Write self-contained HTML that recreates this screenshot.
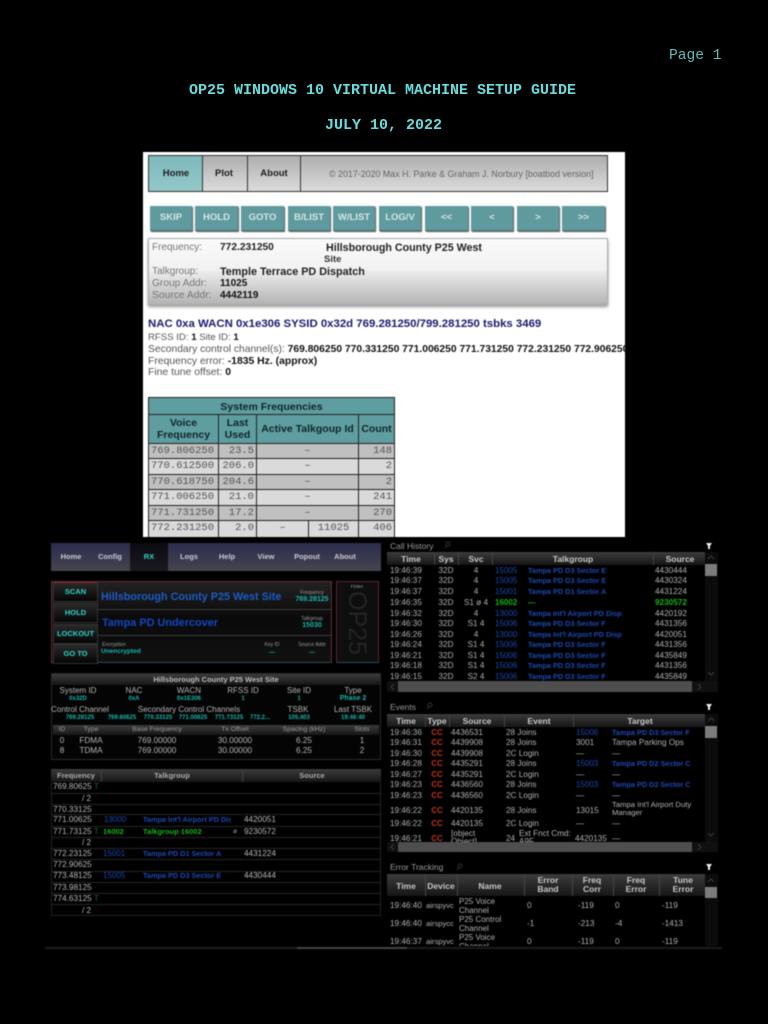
<!DOCTYPE html>
<html><head><meta charset="utf-8"><title>OP25 Windows 10 Virtual Machine Setup Guide</title>
<style>
html,body{margin:0;padding:0;background:#000;width:768px;height:1024px;overflow:hidden}
body{position:relative;font-family:"Liberation Sans",sans-serif}
i{position:absolute;font-style:normal;white-space:nowrap;line-height:12px;display:block}
.c{transform:translateX(-50%)}
.b{font-weight:bold}
.d{position:absolute}
.lay{position:absolute;left:0;top:0;width:768px;height:1024px}
.mono{font-family:"Liberation Mono",monospace}
.nb{color:#1d1d1d;font-weight:bold;font-size:9px}
.btn{position:absolute;top:206px;height:25px;background:#5f9a9e;box-shadow:1px 1px 1px #555;border-bottom:1px solid #4a7478;box-sizing:border-box;color:#d5e6e6;font-weight:bold;font-size:9.5px;text-align:center;line-height:24px}
.g{color:#777}
.k{color:#111;font-weight:bold}
.th{position:absolute;background:#5f9ea0;border:1px solid #222;box-sizing:border-box;color:#10262a;font-weight:bold;font-size:10.5px;text-align:center;line-height:14px;display:flex;align-items:center;justify-content:center}
.td{position:absolute;border:1px solid #222;box-sizing:border-box;color:#555;font-size:10.5px;font-family:"Liberation Mono",monospace;line-height:14px;padding:0 2px;white-space:nowrap}
.dk{background:#c0c0c0}.lt{background:#dadada}
.nv{color:#c8c8d0;font-size:7.5px;font-weight:bold}
.sb{position:absolute;left:53px;width:45px;height:20px;background:linear-gradient(#2a2a2a,#050505);border:1px solid #333;box-sizing:border-box;color:#2dd4c8;font-size:7.5px;font-weight:bold;text-align:center;line-height:18px}
.l{color:#9a9a9a;font-size:6.8px}
.v{color:#17b5ab;font-size:6px;font-weight:bold}
.w{color:#b5b5b5;font-size:8.2px}
.h{color:#b5b5b5;font-size:7.5px;font-weight:bold}
.bl{color:#1c48b0;font-size:7.3px;font-weight:bold}
.id{font-size:8px;font-weight:normal}
.hb{position:absolute;background:linear-gradient(#3c3c3c,#161616)}
.se{position:absolute;width:1px;background:#444}
.ln{position:absolute;height:1px;background:#242424}
.sc{position:absolute;background:#7c7c7c}
.sh{position:absolute;background:#4e4e4e}
.t2{color:#b0b0b0;font-size:8.2px}
.hh{color:#c8c8c8;font-size:8.5px;font-weight:bold}
.rd{color:#c0341c;font-size:8px;font-weight:bold}
.gr{color:#19b019;font-size:7.5px;font-weight:bold}
.ti{color:#999;font-size:8.5px}
</style></head><body>

<i class="mono" style="left:669px;top:50px;font-size:14.6px;color:#5cbcbc">Page 1</i>
<i class="mono b" style="left:189px;top:85px;font-size:15px;color:#68dcdc">OP25 WINDOWS 10 VIRTUAL MACHINE SETUP GUIDE</i>
<i class="mono b" style="left:325px;top:120px;font-size:15px;color:#68dcdc">JULY 10, 2022</i>

<div class="lay" style="filter:blur(.4px)">
<div class="d" style="left:143px;top:152px;width:482px;height:385px;background:#fff"></div>

<div class="d" style="left:148px;top:155px;width:460px;height:37px;box-sizing:border-box;border:1px solid #333;background:linear-gradient(#aeaeae,#dcdcdc)"></div>
<div class="d" style="left:149px;top:156px;width:53px;height:35px;background:linear-gradient(#7eb9bc,#93c8ca);border-right:1px solid #333"></div>
<div class="d" style="left:202px;top:156px;width:45px;height:35px;border-right:1px solid #333"></div>
<div class="d" style="left:247px;top:156px;width:53px;height:35px;border-right:1px solid #333"></div>
<i class="c nb" style="left:176px;top:168px;font-size:9.5px">Home</i>
<i class="c nb" style="left:224px;top:168px;font-size:9.5px">Plot</i>
<i class="c nb" style="left:274px;top:168px;font-size:9.5px">About</i>
<i style="left:329px;top:168px;font-size:8.9px;color:#666">© 2017-2020 Max H. Parke &amp; Graham J. Norbury [boatbod version]</i>

<div class="btn" style="left:150px;width:42px">SKIP</div>
<div class="btn" style="left:195px;width:43px">HOLD</div>
<div class="btn" style="left:241px;width:43px">GOTO</div>
<div class="btn" style="left:288px;width:42px">B/LIST</div>
<div class="btn" style="left:333px;width:42px">W/LIST</div>
<div class="btn" style="left:379px;width:42px">LOG/V</div>
<div class="btn" style="left:425px;width:43px">&lt;&lt;</div>
<div class="btn" style="left:471px;width:42px">&lt;</div>
<div class="btn" style="left:517px;width:42px">&gt;</div>
<div class="btn" style="left:562px;width:43px">&gt;&gt;</div>

<div class="d" style="left:148px;top:238px;width:460px;height:67px;box-sizing:border-box;border:1px solid #aaa;background:linear-gradient(#fafafa,#f2f2f2 45%,#b4b4b4);box-shadow:0 2px 3px #999"></div>
<i class="g" style="left:152px;top:242px;font-size:10px">Frequency:</i>
<i class="k" style="left:220px;top:242px;font-size:10.2px;color:#222">772.231250</i>
<i class="k" style="left:326px;top:242px;font-size:10.7px;color:#222">Hillsborough County P25 West</i>
<i class="k" style="left:324px;top:254px;font-size:9.5px;color:#333">Site</i>
<i class="g" style="left:152px;top:266px;font-size:10px">Talkgroup:</i>
<i class="k" style="left:220px;top:266px;font-size:10.8px;color:#222">Temple Terrace PD Dispatch</i>
<i class="g" style="left:152px;top:278px;font-size:10.2px">Group Addr:</i>
<i class="k" style="left:220px;top:278px;font-size:10px">11025</i>
<i class="g" style="left:152px;top:290px;font-size:10.3px">Source Addr:</i>
<i class="k" style="left:220px;top:290px;font-size:10px">4442119</i>

<i class="b" style="left:148px;top:318px;font-size:11.4px;color:#1a1a6e">NAC 0xa WACN 0x1e306 SYSID 0x32d 769.281250/799.281250 tsbks 3469</i>
<i style="left:148px;top:332px;font-size:9.6px;color:#555">RFSS ID: <span style="color:#111;font-weight:bold">1</span> Site ID: <span style="color:#111;font-weight:bold">1</span></i>
<i style="left:148px;top:344px;font-size:10.3px;color:#555;width:477px;overflow:hidden">Secondary control channel(s): <span style="color:#111;font-weight:bold">769.806250 770.331250 771.006250 771.731250 772.231250 772.906250</span></i>
<i style="left:148px;top:356px;font-size:10.4px;color:#555">Frequency error: <span style="color:#111;font-weight:bold">-1835 Hz. (approx)</span></i>
<i style="left:148px;top:367px;font-size:10.4px;color:#555">Fine tune offset: <span style="color:#111;font-weight:bold">0</span></i>

<div class="th" style="left:148px;top:397px;width:247px;height:18px;padding-top:2px">System Frequencies</div>
<div class="th" style="left:148px;top:414px;width:71px;height:30px;line-height:12px">Voice<br>Frequency</div>
<div class="th" style="left:218px;top:414px;width:39px;height:30px;line-height:12px">Last<br>Used</div>
<div class="th" style="left:256px;top:414px;width:103px;height:30px">Active Talkgoup Id</div>
<div class="th" style="left:358px;top:414px;width:37px;height:30px">Count</div>

<div class="td dk" style="left:148px;top:443px;width:71px;height:16px">769.806250</div><div class="td dk" style="left:218px;top:443px;width:39px;height:16px;text-align:right">23.5</div><div class="td dk" style="left:256px;top:443px;width:103px;height:16px;text-align:center">–</div><div class="td dk" style="left:358px;top:443px;width:37px;height:16px;text-align:right">148</div>
<div class="td lt" style="left:148px;top:458px;width:71px;height:17px">770.612500</div><div class="td lt" style="left:218px;top:458px;width:39px;height:17px;text-align:right">206.0</div><div class="td lt" style="left:256px;top:458px;width:103px;height:17px;text-align:center">–</div><div class="td lt" style="left:358px;top:458px;width:37px;height:17px;text-align:right">2</div>
<div class="td dk" style="left:148px;top:474px;width:71px;height:16px">770.618750</div><div class="td dk" style="left:218px;top:474px;width:39px;height:16px;text-align:right">204.6</div><div class="td dk" style="left:256px;top:474px;width:103px;height:16px;text-align:center">–</div><div class="td dk" style="left:358px;top:474px;width:37px;height:16px;text-align:right">2</div>
<div class="td lt" style="left:148px;top:489px;width:71px;height:17px">771.006250</div><div class="td lt" style="left:218px;top:489px;width:39px;height:17px;text-align:right">21.0</div><div class="td lt" style="left:256px;top:489px;width:103px;height:17px;text-align:center">–</div><div class="td lt" style="left:358px;top:489px;width:37px;height:17px;text-align:right">241</div>
<div class="td dk" style="left:148px;top:505px;width:71px;height:16px">771.731250</div><div class="td dk" style="left:218px;top:505px;width:39px;height:16px;text-align:right">17.2</div><div class="td dk" style="left:256px;top:505px;width:103px;height:16px;text-align:center">–</div><div class="td dk" style="left:358px;top:505px;width:37px;height:16px;text-align:right">270</div>
<div class="td lt" style="left:148px;top:520px;width:71px;height:17px;border-bottom:0">772.231250</div><div class="td lt" style="left:218px;top:520px;width:39px;height:17px;text-align:right;border-bottom:0">2.0</div><div class="td lt" style="left:256px;top:520px;width:53px;height:17px;text-align:center;border-bottom:0">–</div><div class="td lt" style="left:308px;top:520px;width:51px;height:17px;text-align:center;border-bottom:0">11025</div><div class="td lt" style="left:358px;top:520px;width:37px;height:17px;text-align:right;border-bottom:0">406</div>
</div>

<div class="lay" style="filter:blur(.45px)">
<!-- nav -->
<div class="d" style="left:51px;top:543px;width:330px;height:28px;background:linear-gradient(#2c2c4e,#45454f)"></div>
<div class="d" style="left:130px;top:543px;width:38px;height:28px;background:linear-gradient(#0a0a10,#1a1a20)"></div>
<i class="c nv" style="left:71px;top:551px">Home</i><i class="c nv" style="left:110px;top:551px">Config</i><i class="c nv" style="left:149px;top:551px;color:#2dd4c8">RX</i><i class="c nv" style="left:189px;top:551px">Logs</i><i class="c nv" style="left:227px;top:551px">Help</i><i class="c nv" style="left:266px;top:551px">View</i><i class="c nv" style="left:307px;top:551px">Popout</i><i class="c nv" style="left:345px;top:551px">About</i>

<!-- rx panel -->
<div class="d" style="left:51px;top:581px;width:281px;height:82px;box-sizing:border-box;border:1px solid #6a2a30;border-bottom-color:#2a4a5a;background:linear-gradient(#222,#0a0a0a 45%,#111)"></div>
<div class="d" style="left:336px;top:581px;width:43px;height:82px;box-sizing:border-box;border:1px solid #5a2530;border-bottom-color:#20506a;background:#0e0e0e"></div>
<div class="ln" style="left:98px;top:609px;width:234px;background:#3a3a3a"></div>
<div class="ln" style="left:98px;top:635px;width:234px;background:#3a3a3a"></div>
<div class="sb" style="top:582px;border-top-color:#7a2a2a">SCAN</div>
<div class="sb" style="top:603px">HOLD</div>
<div class="sb" style="top:624px">LOCKOUT</div>
<div class="sb" style="top:644px">GO TO</div>
<i class="b" style="left:101px;top:591px;font-size:10.8px;color:#1c5cc8">Hillsborough County P25 West Site</i>
<i class="b" style="left:102px;top:617px;font-size:10.9px;color:#1446c0">Tampa PD Undercover</i>
<i class="c l" style="left:312px;top:587px;font-size:5px">Frequency</i><i class="c v" style="left:312px;top:594px;font-size:7px">769.28125</i>
<i class="c l" style="left:312px;top:613px;font-size:5px">Talkgroup</i><i class="c v" style="left:312px;top:620px;font-size:7px">15030</i>
<i class="l" style="left:102px;top:639px;font-size:5px">Encryption</i><i class="v" style="left:101px;top:646px;font-size:6.5px">Unencrypted</i>
<i class="c l" style="left:272px;top:639px;font-size:5px">Key ID</i><i class="c v" style="left:272px;top:647px">—</i>
<i class="c l" style="left:312px;top:639px;font-size:5px">Source Addr</i><i class="c v" style="left:312px;top:647px">—</i>
<i class="c l" style="left:357px;top:581px;font-size:4.5px">FDMA</i>
<i style="left:357px;top:623px;font-size:25px;line-height:28px;color:#242424;transform:translate(-50%,-50%) rotate(90deg)">OP25</i>

<!-- system panel -->
<div class="d" style="left:51px;top:673px;width:330px;height:87px;box-sizing:border-box;border:1px solid #2a2a2a;background:#040404"></div>
<div class="hb" style="left:52px;top:674px;width:328px;height:11px"></div>
<i class="c" style="left:216px;top:674px;font-size:7.5px;font-weight:bold;color:#bbb">Hillsborough County P25 West Site</i>
<i class="c w" style="left:78px;top:685px;font-size:8px">System ID</i><i class="c v" style="left:78px;top:693px">0x32D</i>
<i class="c w" style="left:134px;top:685px;font-size:8px">NAC</i><i class="c v" style="left:134px;top:693px">0xA</i>
<i class="c w" style="left:189px;top:685px;font-size:8px">WACN</i><i class="c v" style="left:189px;top:693px">0x1E306</i>
<i class="c w" style="left:243px;top:685px;font-size:8px">RFSS ID</i><i class="c v" style="left:243px;top:693px">1</i>
<i class="c w" style="left:299px;top:685px;font-size:8px">Site ID</i><i class="c v" style="left:299px;top:693px">1</i>
<i class="c w" style="left:353px;top:685px;font-size:8px">Type</i><i class="c v" style="left:353px;top:693px;font-size:7px">Phase 2</i>
<i class="c w" style="left:80px;top:704px;font-size:8px">Control Channel</i><i class="c w" style="left:189px;top:704px;font-size:8px">Secondary Control Channels</i><i class="c w" style="left:298px;top:704px;font-size:8px">TSBK</i><i class="c w" style="left:353px;top:704px;font-size:8px">Last TSBK</i>
<i class="c v" style="left:80px;top:712px">769.28125</i><i class="c v" style="left:122px;top:712px">769.80625</i><i class="c v" style="left:158px;top:712px">770.33125</i><i class="c v" style="left:193px;top:712px">771.00625</i><i class="c v" style="left:229px;top:712px">771.73125</i><i class="c v" style="left:260px;top:712px">772.2...</i><i class="c v" style="left:299px;top:712px">105,403</i><i class="c v" style="left:353px;top:712px">19:46:40</i>
<div class="hb" style="left:53px;top:725px;width:326px;height:10px"></div>
<i class="c l" style="left:62px;top:724px">ID</i><i class="c l" style="left:91px;top:724px">Type</i><i class="c l" style="left:157px;top:724px">Base Frequency</i><i class="c l" style="left:235px;top:724px">Tx Offset</i><i class="c l" style="left:304px;top:724px">Spacing (kHz)</i><i class="c l" style="left:362px;top:724px">Slots</i>
<i class="c w" style="left:62px;top:735px">0</i><i class="c w" style="left:91px;top:735px">FDMA</i><i class="c w" style="left:157px;top:735px">769.00000</i><i class="c w" style="left:235px;top:735px">30.00000</i><i class="c w" style="left:304px;top:735px">6.25</i><i class="c w" style="left:362px;top:735px">1</i>
<i class="c w" style="left:62px;top:745px">8</i><i class="c w" style="left:91px;top:745px">TDMA</i><i class="c w" style="left:157px;top:745px">769.00000</i><i class="c w" style="left:235px;top:745px">30.00000</i><i class="c w" style="left:304px;top:745px">6.25</i><i class="c w" style="left:362px;top:745px">2</i>

<!-- freq table -->
<div class="d" style="left:51px;top:769px;width:330px;height:147px;box-sizing:border-box;border:1px solid #222"></div>
<div class="hb" style="left:51px;top:769px;width:330px;height:13px"></div>
<div class="se" style="left:101px;top:769px;height:13px"></div><div class="se" style="left:242px;top:769px;height:13px"></div>
<i class="c h" style="left:76px;top:770px;color:#aaa">Frequency</i><i class="c h" style="left:172px;top:770px;color:#aaa">Talkgroup</i><i class="c h" style="left:312px;top:770px;color:#aaa">Source</i>
<div class="ln" style="left:51px;top:793px;width:330px"></div><div class="ln" style="left:51px;top:804px;width:330px"></div><div class="ln" style="left:51px;top:814px;width:330px"></div><div class="ln" style="left:51px;top:826px;width:330px"></div><div class="ln" style="left:51px;top:837px;width:330px"></div><div class="ln" style="left:51px;top:848px;width:330px"></div><div class="ln" style="left:51px;top:859px;width:330px"></div><div class="ln" style="left:51px;top:871px;width:330px"></div><div class="ln" style="left:51px;top:882px;width:330px"></div><div class="ln" style="left:51px;top:893px;width:330px"></div><div class="ln" style="left:51px;top:904px;width:330px"></div>
<i class="w" style="left:53px;top:781px">769.80625 <span style="color:#0c6a20">T</span></i>
<i class="w" style="left:82px;top:793px">/ 2</i>
<i class="w" style="left:53px;top:804px;height:10px;overflow:hidden">770.33125</i>
<i class="w" style="left:53px;top:814px">771.00625</i><i class="bl id" style="left:104px;top:814px">13000</i><i class="bl" style="left:143px;top:814px;width:88px;overflow:hidden">Tampa Int'l Airport PD Disp</i><i class="w" style="left:244px;top:814px">4420051</i>
<i class="w" style="left:53px;top:826px">771.73125 <span style="color:#0c6a20">T</span></i><i class="gr id" style="left:103px;top:826px;font-weight:bold">16002</i><i class="gr" style="left:143px;top:826px">Talkgroup 16002</i><i class="l" style="left:233px;top:826px">ø</i><i class="w" style="left:244px;top:826px">9230572</i>
<i class="w" style="left:82px;top:837px">/ 2</i>
<i class="w" style="left:53px;top:848px">772.23125</i><i class="bl id" style="left:103px;top:848px">15001</i><i class="bl" style="left:143px;top:848px">Tampa PD D1 Sector A</i><i class="w" style="left:244px;top:848px">4431224</i>
<i class="w" style="left:53px;top:859px">772.90625</i>
<i class="w" style="left:53px;top:870px">773.48125</i><i class="bl id" style="left:103px;top:870px">15005</i><i class="bl" style="left:143px;top:870px">Tampa PD D3 Sector E</i><i class="w" style="left:244px;top:870px">4430444</i>
<i class="w" style="left:53px;top:882px">773.98125</i>
<i class="w" style="left:53px;top:893px">774.63125 <span style="color:#0c6a20">T</span></i>
<i class="w" style="left:82px;top:905px">/ 2</i>

<div class="d" style="left:45px;top:947px;width:677px;height:2px;background:#1c1c1c"></div>
<div class="d" style="left:297px;top:947px;width:110px;height:2px;background:#444"></div>

<!-- call history -->
<i class="ti" style="left:390px;top:540px">Call History</i>
<svg class="d" style="left:444px;top:541px" width="7" height="8"><circle cx="4" cy="3" r="2" fill="none" stroke="#333"/><path d="M3 4.5 1 7" stroke="#333"/></svg>
<svg class="d" style="left:705px;top:542px" width="8" height="8"><path d="M1 1H7L5 4V7H3V4Z" fill="#eee"/></svg>
<div class="hb" style="left:387px;top:552px;width:318px;height:13px"></div>
<div class="se" style="left:434px;top:552px;height:13px"></div><div class="se" style="left:458px;top:552px;height:13px"></div><div class="se" style="left:492px;top:552px;height:13px"></div><div class="se" style="left:653px;top:552px;height:13px"></div>
<i class="c hh" style="left:411px;top:553px">Time</i><i class="c hh" style="left:446px;top:553px">Sys</i><i class="c hh" style="left:476px;top:553px">Svc</i><i class="c hh" style="left:573px;top:553px">Talkgroup</i><i class="c hh" style="left:680px;top:553px">Source</i>
<div class="d" style="left:705px;top:552px;width:13px;height:129px;background:#0c0c0c"></div>
<div class="sc" style="left:705px;top:564px;width:12px;height:12px"></div>
<svg class="d" style="left:707px;top:555px" width="8" height="6"><path d="M1 4 4 1 7 4" fill="none" stroke="#3c3c3c"/></svg>
<svg class="d" style="left:707px;top:671px" width="8" height="6"><path d="M1 1 4 4 7 1" fill="none" stroke="#3c3c3c"/></svg>
<div class="lay" style="clip-path:inset(565px 0 343px 0)">
<i class="t2" style="left:390px;top:565px">19:46:39</i><i class="c t2" style="left:446px;top:565px">32D</i><i class="c t2" style="left:476px;top:565px">4</i><i class="bl id" style="left:495px;top:565px">15005</i><i class="bl" style="left:528px;top:565px">Tampa PD D3 Sector E</i><i class="t2" style="left:655px;top:565px">4430444</i>
<i class="t2" style="left:390px;top:575px">19:46:37</i><i class="c t2" style="left:446px;top:575px">32D</i><i class="c t2" style="left:476px;top:575px">4</i><i class="bl id" style="left:495px;top:575px">15005</i><i class="bl" style="left:528px;top:575px">Tampa PD D3 Sector E</i><i class="t2" style="left:655px;top:575px">4430324</i>
<i class="t2" style="left:390px;top:586px">19:46:37</i><i class="c t2" style="left:446px;top:586px">32D</i><i class="c t2" style="left:476px;top:586px">4</i><i class="bl id" style="left:495px;top:586px">15001</i><i class="bl" style="left:528px;top:586px">Tampa PD D1 Sector A</i><i class="t2" style="left:655px;top:586px">4431224</i>
<i class="t2" style="left:390px;top:597px">19:46:35</i><i class="c t2" style="left:446px;top:597px">32D</i><i class="c t2" style="left:476px;top:597px">S1 ø 4</i><i class="gr" style="left:495px;top:597px;font-size:8px">16002</i><i class="gr" style="left:528px;top:597px">—</i><i class="gr" style="left:655px;top:597px;font-size:8.2px">9230572</i>
<i class="t2" style="left:390px;top:608px">19:46:32</i><i class="c t2" style="left:446px;top:608px">32D</i><i class="c t2" style="left:476px;top:608px">4</i><i class="bl id" style="left:495px;top:608px">13000</i><i class="bl" style="left:528px;top:608px">Tampa Int'l Airport PD Disp</i><i class="t2" style="left:655px;top:608px">4420192</i>
<i class="t2" style="left:390px;top:618px">19:46:30</i><i class="c t2" style="left:446px;top:618px">32D</i><i class="c t2" style="left:476px;top:618px">S1 4</i><i class="bl id" style="left:495px;top:618px">15006</i><i class="bl" style="left:528px;top:618px">Tampa PD D3 Sector F</i><i class="t2" style="left:655px;top:618px">4431356</i>
<i class="t2" style="left:390px;top:629px">19:46:26</i><i class="c t2" style="left:446px;top:629px">32D</i><i class="c t2" style="left:476px;top:629px">4</i><i class="bl id" style="left:495px;top:629px">13000</i><i class="bl" style="left:528px;top:629px">Tampa Int'l Airport PD Disp</i><i class="t2" style="left:655px;top:629px">4420051</i>
<i class="t2" style="left:390px;top:639px">19:46:24</i><i class="c t2" style="left:446px;top:639px">32D</i><i class="c t2" style="left:476px;top:639px">S1 4</i><i class="bl id" style="left:495px;top:639px">15006</i><i class="bl" style="left:528px;top:639px">Tampa PD D3 Sector F</i><i class="t2" style="left:655px;top:639px">4431356</i>
<i class="t2" style="left:390px;top:650px">19:46:21</i><i class="c t2" style="left:446px;top:650px">32D</i><i class="c t2" style="left:476px;top:650px">S1 4</i><i class="bl id" style="left:495px;top:650px">15006</i><i class="bl" style="left:528px;top:650px">Tampa PD D3 Sector F</i><i class="t2" style="left:655px;top:650px">4435849</i>
<i class="t2" style="left:390px;top:660px">19:46:18</i><i class="c t2" style="left:446px;top:660px">32D</i><i class="c t2" style="left:476px;top:660px">S1 4</i><i class="bl id" style="left:495px;top:660px">15006</i><i class="bl" style="left:528px;top:660px">Tampa PD D3 Sector F</i><i class="t2" style="left:655px;top:660px">4431356</i>
<i class="t2" style="left:390px;top:671px">19:46:15</i><i class="c t2" style="left:446px;top:671px">32D</i><i class="c t2" style="left:476px;top:671px">S2 4</i><i class="bl id" style="left:495px;top:671px">15006</i><i class="bl" style="left:528px;top:671px">Tampa PD D3 Sector F</i><i class="t2" style="left:655px;top:671px">4435849</i>
</div>
<div class="d" style="left:387px;top:681px;width:331px;height:11px;background:#101010"></div>
<div class="sh" style="left:398px;top:681px;width:294px;height:11px"></div>
<svg class="d" style="left:390px;top:683px" width="6" height="8"><path d="M4 1 1 4 4 7" fill="none" stroke="#3c3c3c"/></svg>
<svg class="d" style="left:697px;top:683px" width="6" height="8"><path d="M1 1 4 4 1 7" fill="none" stroke="#3c3c3c"/></svg>

<!-- events -->
<i class="ti" style="left:390px;top:701px">Events</i>
<svg class="d" style="left:426px;top:702px" width="7" height="8"><circle cx="4" cy="3" r="2" fill="none" stroke="#333"/><path d="M3 4.5 1 7" stroke="#333"/></svg>
<svg class="d" style="left:705px;top:703px" width="8" height="8"><path d="M1 1H7L5 4V7H3V4Z" fill="#eee"/></svg>
<div class="hb" style="left:387px;top:714px;width:318px;height:13px"></div>
<div class="se" style="left:425px;top:714px;height:13px"></div><div class="se" style="left:449px;top:714px;height:13px"></div><div class="se" style="left:504px;top:714px;height:13px"></div><div class="se" style="left:573px;top:714px;height:13px"></div>
<i class="c hh" style="left:406px;top:715px">Time</i><i class="c hh" style="left:437px;top:715px">Type</i><i class="c hh" style="left:477px;top:715px">Source</i><i class="c hh" style="left:539px;top:715px">Event</i><i class="c hh" style="left:640px;top:715px">Target</i>
<div class="d" style="left:705px;top:714px;width:13px;height:128px;background:#0c0c0c"></div>
<div class="sc" style="left:705px;top:726px;width:12px;height:12px"></div>
<svg class="d" style="left:707px;top:717px" width="8" height="6"><path d="M1 4 4 1 7 4" fill="none" stroke="#3c3c3c"/></svg>
<svg class="d" style="left:707px;top:832px" width="8" height="6"><path d="M1 1 4 4 7 1" fill="none" stroke="#3c3c3c"/></svg>
<div class="lay" style="clip-path:inset(727px 0 182px 0)">
<i class="t2" style="left:390px;top:727px">19:46:36</i><i class="c rd" style="left:437px;top:727px">CC</i><i class="t2" style="left:451px;top:727px">4436531</i><i class="t2" style="left:506px;top:727px">28 Joins</i><i class="bl id" style="left:576px;top:727px">15006</i><i class="bl" style="left:612px;top:727px">Tampa PD D3 Sector F</i>
<i class="t2" style="left:390px;top:737px">19:46:31</i><i class="c rd" style="left:437px;top:737px">CC</i><i class="t2" style="left:451px;top:737px">4439908</i><i class="t2" style="left:506px;top:737px">28 Joins</i><i class="t2" style="left:576px;top:737px">3001</i><i class="t2" style="left:612px;top:737px">Tampa Parking Ops</i>
<i class="t2" style="left:390px;top:748px">19:46:30</i><i class="c rd" style="left:437px;top:748px">CC</i><i class="t2" style="left:451px;top:748px">4439908</i><i class="t2" style="left:506px;top:748px">2C Login</i><i class="t2" style="left:576px;top:748px">—</i><i class="t2" style="left:612px;top:748px">—</i>
<i class="t2" style="left:390px;top:758px">19:46:28</i><i class="c rd" style="left:437px;top:758px">CC</i><i class="t2" style="left:451px;top:758px">4435291</i><i class="t2" style="left:506px;top:758px">28 Joins</i><i class="bl id" style="left:576px;top:758px">15003</i><i class="bl" style="left:612px;top:758px">Tampa PD D2 Sector C</i>
<i class="t2" style="left:390px;top:769px">19:46:27</i><i class="c rd" style="left:437px;top:769px">CC</i><i class="t2" style="left:451px;top:769px">4435291</i><i class="t2" style="left:506px;top:769px">2C Login</i><i class="t2" style="left:576px;top:769px">—</i><i class="t2" style="left:612px;top:769px">—</i>
<i class="t2" style="left:390px;top:779px">19:46:23</i><i class="c rd" style="left:437px;top:779px">CC</i><i class="t2" style="left:451px;top:779px">4436560</i><i class="t2" style="left:506px;top:779px">28 Joins</i><i class="bl id" style="left:576px;top:779px">15003</i><i class="bl" style="left:612px;top:779px">Tampa PD D2 Sector C</i>
<i class="t2" style="left:390px;top:790px">19:46:23</i><i class="c rd" style="left:437px;top:790px">CC</i><i class="t2" style="left:451px;top:790px">4436560</i><i class="t2" style="left:506px;top:790px">2C Login</i><i class="t2" style="left:576px;top:790px">—</i><i class="t2" style="left:612px;top:790px">—</i>
<i class="t2" style="left:390px;top:805px;height:8px;overflow:hidden">19:46:22</i><i class="c rd" style="left:437px;top:805px;height:8px;overflow:hidden">CC</i><i class="t2" style="left:451px;top:805px;height:8px;overflow:hidden">4420135</i><i class="t2" style="left:506px;top:805px;height:8px;overflow:hidden">28 Joins</i><i class="t2" style="left:576px;top:805px;height:8px;overflow:hidden">13015</i>
<i class="t2" style="left:612px;top:801px;line-height:8px;font-size:7.7px">Tampa Int'l Airport Duty<br>Manager</i>
<i class="t2" style="left:390px;top:818px">19:46:22</i><i class="c rd" style="left:437px;top:818px">CC</i><i class="t2" style="left:451px;top:818px">4420135</i><i class="t2" style="left:506px;top:818px">2C Login</i><i class="t2" style="left:576px;top:818px">—</i><i class="t2" style="left:612px;top:818px">—</i>
<i class="t2" style="left:390px;top:833px">19:46:21</i><i class="c rd" style="left:437px;top:833px">CC</i><i class="t2" style="left:451px;top:830px;line-height:8px">[object<br>Object]</i><i class="t2" style="left:506px;top:833px">24</i><i class="t2" style="left:519px;top:830px;line-height:8px">Ext Fnct Cmd:<br>A9F</i><i class="t2" style="left:575px;top:833px">4420135</i><i class="t2" style="left:612px;top:833px">—</i>
</div>
<div class="d" style="left:387px;top:842px;width:331px;height:10px;background:#101010"></div>
<div class="sh" style="left:398px;top:842px;width:294px;height:10px"></div>
<svg class="d" style="left:390px;top:843px" width="6" height="8"><path d="M4 1 1 4 4 7" fill="none" stroke="#3c3c3c"/></svg>
<svg class="d" style="left:697px;top:843px" width="6" height="8"><path d="M1 1 4 4 1 7" fill="none" stroke="#3c3c3c"/></svg>

<!-- error tracking -->
<i class="ti" style="left:390px;top:861px">Error Tracking</i>
<svg class="d" style="left:456px;top:863px" width="7" height="8"><circle cx="4" cy="3" r="2" fill="none" stroke="#333"/><path d="M3 4.5 1 7" stroke="#333"/></svg>
<svg class="d" style="left:705px;top:863px" width="8" height="8"><path d="M1 1H7L5 4V7H3V4Z" fill="#eee"/></svg>
<div class="hb" style="left:387px;top:874px;width:318px;height:22px"></div>
<div class="se" style="left:425px;top:874px;height:22px"></div><div class="se" style="left:457px;top:874px;height:22px"></div><div class="se" style="left:524px;top:874px;height:22px"></div><div class="se" style="left:572px;top:874px;height:22px"></div><div class="se" style="left:613px;top:874px;height:22px"></div><div class="se" style="left:659px;top:874px;height:22px"></div>
<i class="c hh" style="left:406px;top:880px">Time</i><i class="c hh" style="left:441px;top:880px">Device</i><i class="c hh" style="left:490px;top:880px">Name</i>
<i class="c hh" style="left:548px;top:876px;line-height:9px;text-align:center">Error<br>Band</i><i class="c hh" style="left:592px;top:876px;line-height:9px;text-align:center">Freq<br>Corr</i><i class="c hh" style="left:636px;top:876px;line-height:9px;text-align:center">Freq<br>Error</i><i class="c hh" style="left:683px;top:876px;line-height:9px;text-align:center">Tune<br>Error</i>
<div class="d" style="left:705px;top:874px;width:13px;height:72px;background:#0c0c0c"></div>
<div class="sc" style="left:705px;top:887px;width:12px;height:11px"></div>
<svg class="d" style="left:707px;top:878px" width="8" height="6"><path d="M1 4 4 1 7 4" fill="none" stroke="#3c3c3c"/></svg>
<div class="lay" style="clip-path:inset(896px 0 78px 0)">
<i class="t2" style="left:390px;top:900px">19:46:40</i><i class="t2" style="left:426px;top:900px;font-size:7.6px">airspyvc</i><i class="t2" style="left:459px;top:897px;line-height:9px;font-size:8px">P25 Voice<br>Channel</i><i class="t2" style="left:527px;top:900px">0</i><i class="t2" style="left:578px;top:900px">-119</i><i class="t2" style="left:615px;top:900px">0</i><i class="t2" style="left:662px;top:900px">-119</i>
<i class="t2" style="left:390px;top:918px">19:46:40</i><i class="t2" style="left:426px;top:918px;font-size:7.6px">airspycc</i><i class="t2" style="left:459px;top:915px;line-height:9px;font-size:8px">P25 Control<br>Channel</i><i class="t2" style="left:527px;top:918px">-1</i><i class="t2" style="left:578px;top:918px">-213</i><i class="t2" style="left:615px;top:918px">-4</i><i class="t2" style="left:662px;top:918px">-1413</i>
<i class="t2" style="left:390px;top:936px">19:46:37</i><i class="t2" style="left:426px;top:936px;font-size:7.6px">airspyvc</i><i class="t2" style="left:459px;top:933px;line-height:9px;font-size:8px">P25 Voice<br>Channel</i><i class="t2" style="left:527px;top:936px">0</i><i class="t2" style="left:578px;top:936px">-119</i><i class="t2" style="left:615px;top:936px">0</i><i class="t2" style="left:662px;top:936px">-119</i>
</div>
</div>
</body></html>
